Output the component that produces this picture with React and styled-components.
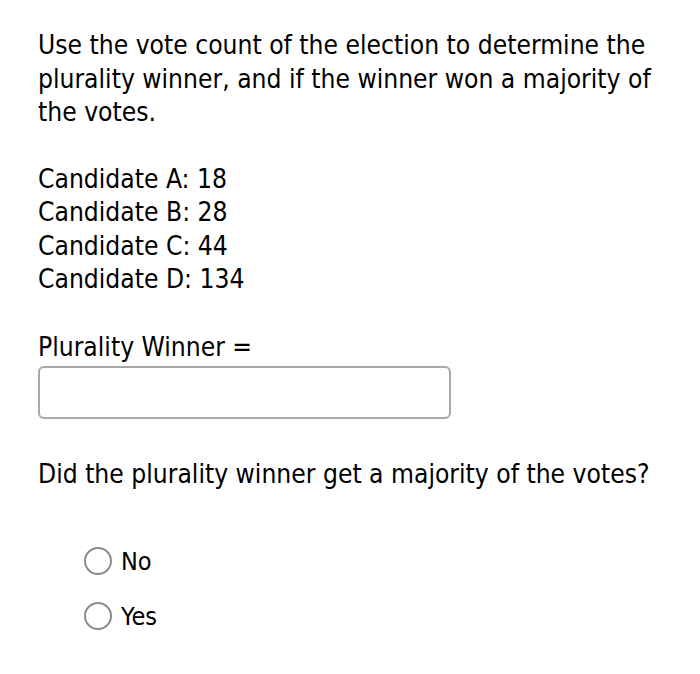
import React, { useState } from 'react';
import styled, { createGlobalStyle } from 'styled-components';

const GlobalStyle = createGlobalStyle`
    body {
        margin: 0;
        background: #fff;
        font-family: "DejaVu Sans Condensed", "DejaVu Sans", Verdana, sans-serif;
        font-stretch: condensed;
        color: #000;
    }
`

const Page = styled.div`
    padding: 29px 0 0 38px;
    width: 668px;
    box-sizing: border-box;
`

const Para = styled.p`
    margin: 0;
    font-size: 26.2px;
    line-height: 33.5px;
    max-width: 630px;
    margin-bottom: ${(props) => props.gap || 0}px;
`

const AnswerBox = styled.input`
    display: block;
    width: 413px;
    height: 53px;
    box-sizing: border-box;
    border: 2px solid #a9a9a9;
    border-radius: 6px;
    margin-top: 2px;
    margin-bottom: 39px;
    font-size: 20px;
    padding: 0 10px;
`

const Options = styled.div`
    display: flex;
    flex-direction: column;
    gap: 26px;
    padding-left: 46px;
    margin-top: 55px;
`

const Option = styled.label`
    display: flex;
    align-items: center;
    gap: 9px;
    font-size: 25px;
    cursor: pointer;
`

const Circle = styled.span`
    width: 28px;
    height: 28px;
    box-sizing: border-box;
    border: 2.5px solid ${(props) => (props.checked ? '#2a62c9' : '#8c8c8c')};
    border-radius: 50%;
    display: flex;
    align-items: center;
    justify-content: center;
    &::after {
        content: '';
        width: 12px;
        height: 12px;
        border-radius: 50%;
        background: ${(props) => (props.checked ? '#2a62c9' : 'transparent')};
    }
`

export default function App() {
    const [choice, setChoice] = useState(null);
    const candidates = [['A', 18], ['B', 28], ['C', 44], ['D', 134]];

    return (
        <>
            <GlobalStyle />
            <Page>
                <Para gap={33}>
                    Use the vote count of the election to determine the plurality winner, and if the winner won a majority of the votes.
                </Para>
                {candidates.map(([name, votes], index) => (
                    <Para key={name} gap={index == candidates.length - 1 ? 34 : 0}>
                        Candidate {name}: {votes}
                    </Para>
                ))}
                <Para>Plurality Winner =</Para>
                <AnswerBox type="text" />
                <Para>Did the plurality winner get a majority of the votes?</Para>
                <Options>
                    {['No', 'Yes'].map((item) => (
                        <Option key={item} onClick={() => setChoice(item)}>
                            <Circle checked={choice == item} />
                            {item}
                        </Option>
                    ))}
                </Options>
            </Page>
        </>
    )
}
